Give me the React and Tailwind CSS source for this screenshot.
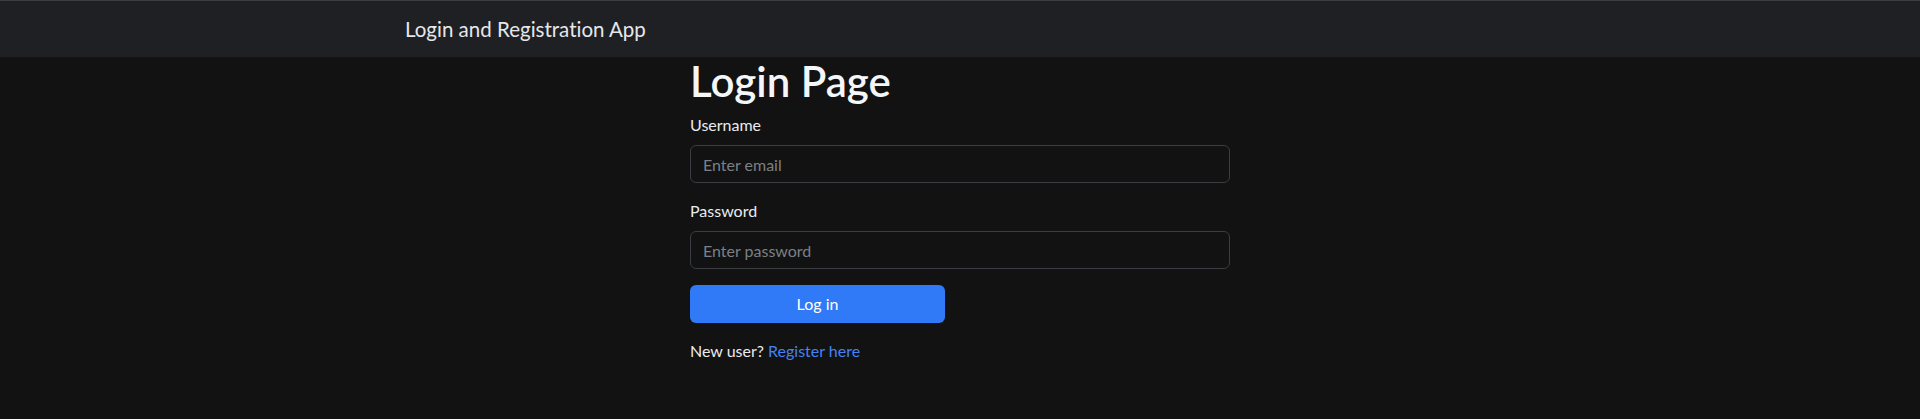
import React from "react";

const font = { fontFamily: "Lato, 'Liberation Sans', sans-serif" };

const Field = ({ label, type, placeholder }) => (
  <div className="mb-4">
    <label className="block mb-2 text-[16px] leading-6 text-[#e9ecef]">{label}</label>
    <input
      type={type}
      placeholder={placeholder}
      className="block w-full h-[38px] px-3 rounded-md border border-[#3a3d42] bg-[#121212] text-[16px] text-[#dee2e6] placeholder:text-[#7b8087] outline-none"
    />
  </div>
);

export default function App() {
  return (
    <div className="min-h-[419px] bg-[#121212] [font-variant-ligatures:none]" style={font}>
      {/* Navbar */}
      <nav className="h-[57px] bg-[#1f2023] border-t border-[#3c3d43]">
        <div className="w-[1140px] mx-auto px-[15px] h-full flex items-center">
          <span className="text-[20.5px] text-[#e6e7e9]">Login and Registration App</span>
        </div>
      </nav>

      {/* Form */}
      <main className="w-[540px] mx-auto">
        <h1 className="text-[42px] leading-[48px] font-semibold text-[#f4f6f8] mb-2">Login Page</h1>
        <form onSubmit={(e) => e.preventDefault()}>
          <Field label="Username" type="email" placeholder="Enter email" />
          <Field label="Password" type="password" placeholder="Enter password" />
          <button
            type="submit"
            className="w-[255px] h-[38px] rounded-md bg-[#3079f7] text-white text-[16px]"
          >
            Log in
          </button>
          <p className="mt-4 text-[16px] leading-6 text-[#e9ecef]">
            New user? <a href="#" className="text-[#4582f4]">Register here</a>
          </p>
        </form>
      </main>
    </div>
  );
}
